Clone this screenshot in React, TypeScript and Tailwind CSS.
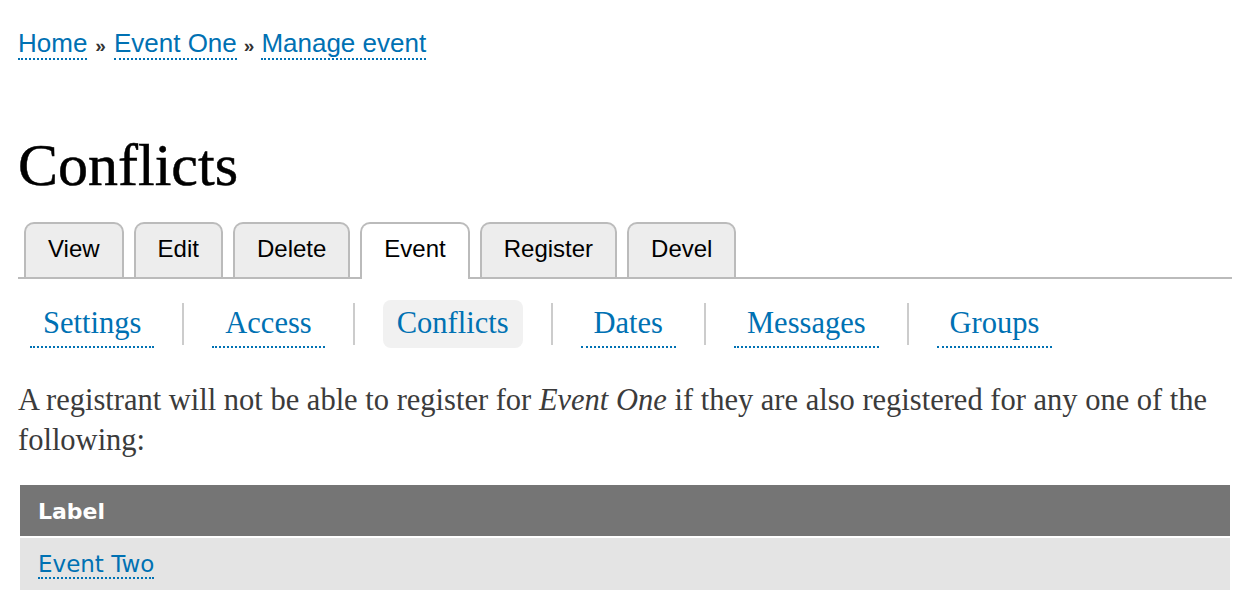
import React from "react";

const sans = { fontFamily: '"Liberation Sans", Arial, sans-serif' };

const tabs = ["View", "Edit", "Delete", "Event", "Register", "Devel"];
const sub = ["Settings", "Access", "Conflicts", "Dates", "Messages", "Groups"];

export default function App() {
  return (
    <div className="min-h-[614px] bg-white pl-[18px] pr-[12px]">
      <div
        className="pt-[25px] text-[26px] leading-[36px] text-[#333]"
        style={sans}
      >
        <a className="text-[#0071b3] border-b-2 border-dotted border-[#0071b3]">Home</a>
        <span className="px-[8px] text-[19px] font-bold text-[#333]">»</span>
        <a className="text-[#0071b3] border-b-2 border-dotted border-[#0071b3]">Event One</a>
        <span className="px-[7px] text-[19px] font-bold text-[#333]">»</span>
        <a className="text-[#0071b3] border-b-2 border-dotted border-[#0071b3]">Manage event</a>
      </div>

      <h1 className="mt-[72px] font-['Liberation_Serif',serif] text-[60px] leading-[58px] text-black [-webkit-text-stroke:0.5px_black]">
        Conflicts
      </h1>

      <ul className="mt-[28px] flex items-end gap-[10px] border-b-2 border-[#bbb] pl-[6px]" style={sans}>
        {tabs.map((t) => {
          const active = t === "Event";
          return (
            <li
              key={t}
              className={
                active
                  ? "-mb-[2px] h-[57px] rounded-t-[10px] border-2 border-b-0 border-[#bbb] bg-white px-[22px] pt-[11px] text-[24px] leading-[28px] text-black"
                  : "h-[55px] rounded-t-[10px] border-2 border-b-0 border-[#bbb] bg-[#ededed] px-[22px] pt-[11px] text-[24px] leading-[28px] text-black"
              }
            >
              {t}
            </li>
          );
        })}
      </ul>

      <ul className="mt-[21px] flex items-center font-['Liberation_Serif',serif] text-[30.5px]">
        {sub.map((s, i) => {
          const active = s === "Conflicts";
          return (
            <React.Fragment key={s}>
              {i > 0 && <li className="h-[42px] w-[2px] bg-[#ccc]" />}
              <li className={i === 0 ? "pl-[12px] pr-[28px]" : "px-[28px]"}>
                <a
                  className={
                    active
                      ? "block rounded-[8px] border-b-2 border-transparent bg-[#f1f1f1] px-[14px] leading-[46px] text-[#0071b3]"
                      : "block border-b-2 border-dotted border-[#0071b3] px-[13px] leading-[46px] text-[#0071b3]"
                  }
                >
                  {s}
                </a>
              </li>
            </React.Fragment>
          );
        })}
      </ul>

      <p className="mt-[32px] font-['Liberation_Serif',serif] text-[30.5px] leading-[40px] text-[#3b3b3b]">
        A registrant will not be able to register for <em>Event One</em> if they are also registered for any one of the following:
      </p>

      <table className="mx-[2px] mt-[25px] w-[1210px] border-collapse font-['DejaVu_Sans',sans-serif]">
        <thead>
          <tr className="bg-[#757575]">
            <th className="h-[52px] px-[18px] pt-[2px] text-left text-[22px] font-bold leading-[26px] text-white">
              Label
            </th>
          </tr>
        </thead>
        <tbody>
          <tr className="border-t-2 border-white bg-[#e4e4e4]">
            <td className="h-[53px] px-[18px] text-left text-[23px] leading-[27px]">
              <a className="border-b-2 border-dotted border-[#0071b3] text-[#0071b3]">Event Two</a>
            </td>
          </tr>
        </tbody>
      </table>
    </div>
  );
}
